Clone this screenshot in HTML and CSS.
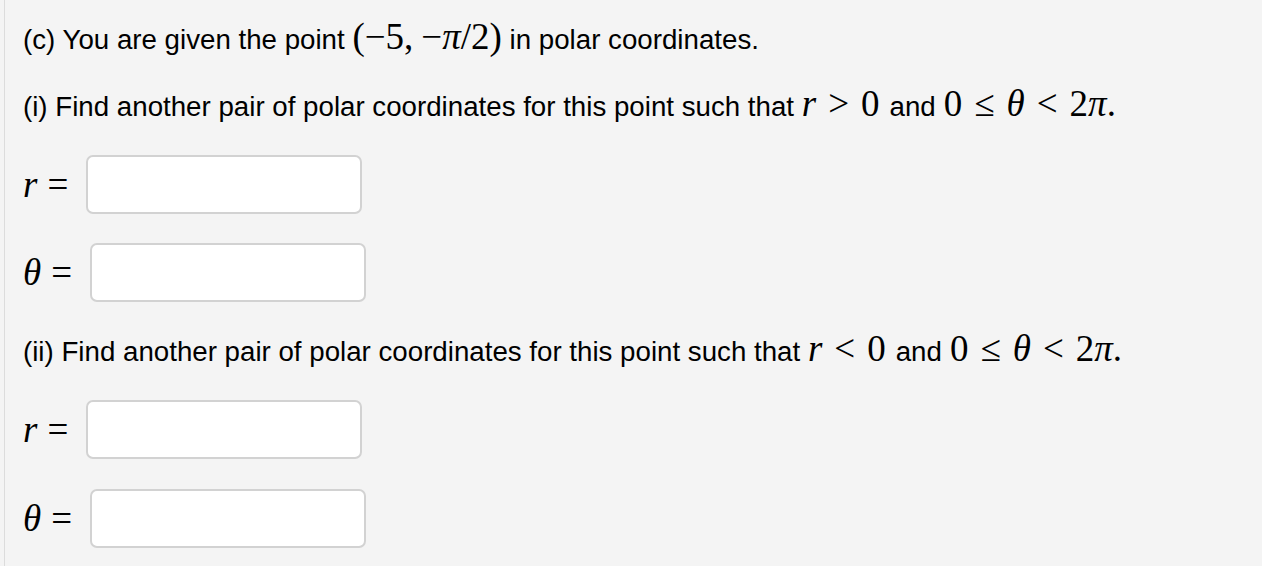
FILE: index.html
```html
<!DOCTYPE html>
<html>
<head>
<meta charset="utf-8">
<link rel="stylesheet" href="styles.css">
</head>
<body>
<div class="panel">
  <p class="para p1">(c) You are given the point <span class="m">(−5,<span class="sp"></span>−<i>π</i>/2)</span> in polar coordinates.</p>
  <p class="para p2">(i) Find another pair of polar coordinates for this point such that <span class="m"><i>r</i><span class="rel">&gt;</span>0</span><span class="and">and</span><span class="m">0<span class="rel">≤</span><i>θ</i><span class="rel">&lt;</span>2<i>π</i>.</span></p>
  <div class="row r1"><span class="m lab"><i>r</i><span class="rel">=</span></span><input class="box" type="text"></div>
  <div class="row r2"><span class="m lab"><i>θ</i><span class="rel">=</span></span><input class="box" type="text"></div>
  <p class="para p3">(ii) Find another pair of polar coordinates for this point such that <span class="m"><i>r</i><span class="rel">&lt;</span>0</span><span class="and">and</span><span class="m">0<span class="rel">≤</span><i>θ</i><span class="rel">&lt;</span>2<i>π</i>.</span></p>
  <div class="row r3"><span class="m lab"><i>r</i><span class="rel">=</span></span><input class="box" type="text"></div>
  <div class="row r4"><span class="m lab"><i>θ</i><span class="rel">=</span></span><input class="box" type="text"></div>
</div>
</body>
</html>
```
FILE: styles.css
```css
html, body {
  margin: 0;
  padding: 0;
  background: #f4f4f4;
}
body {
  height: 566px;
  overflow: hidden;
}
.panel {
  margin-left: 4px;
  border-left: 1px solid #dcdcdc;
  padding-left: 18px;
  padding-top: 25px;
  height: 566px;
  box-sizing: border-box;
  font-family: "Liberation Sans", Arial, sans-serif;
  font-size: 27.7px;
  color: #000;
}
.para {
  margin: 0;
  line-height: 30px;
  height: 30px;
  white-space: nowrap;
}
.m {
  font-family: "Liberation Serif", "Times New Roman", serif;
  font-size: 37px;
  line-height: 0;
}
.m i {
  font-style: italic;
}
.sp {
  display: inline-block;
  width: 8px;
}
.rel {
  margin: 0 12px;
}
.and {
  margin: 0 8px 0 10px;
}
.p2 { margin-top: 37px; }
.p3 { margin-top: 35px; }
.row {
  display: flex;
  align-items: center;
  height: 59px;
}
.r1 { margin-top: 33px; }
.r2 { margin-top: 29px; }
.r3 { margin-top: 33px; }
.r4 { margin-top: 30px; }
.lab {
  display: inline-block;
  margin-right: 18px;
}
.lab .rel {
  margin-left: 10px;
  margin-right: 0;
}
.box {
  width: 276px;
  height: 59px;
  box-sizing: border-box;
  border: 2px solid #d2d2d2;
  border-radius: 7px;
  background: #fff;
  padding: 0 8px;
  margin: 0;
  outline: none;
}
```
